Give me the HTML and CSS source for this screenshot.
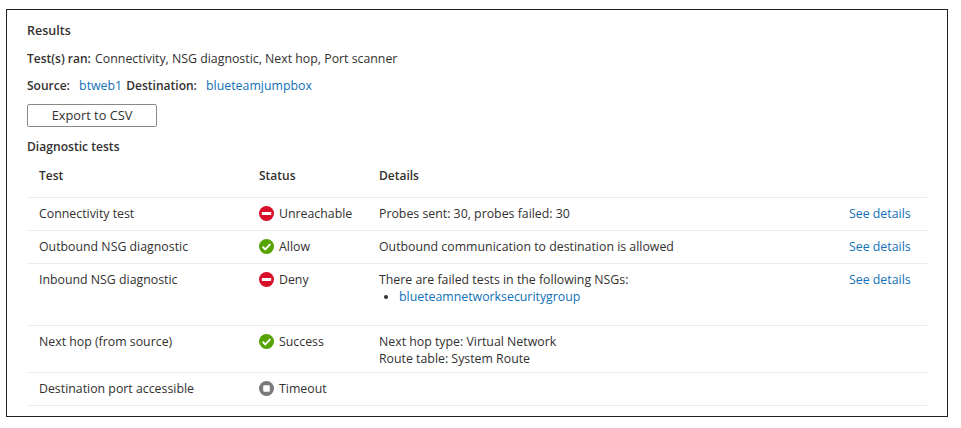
FILE: index.html

```html
<!DOCTYPE html>
<html lang="en">
<head>
  <meta charset="UTF-8">
  <meta name="viewport" content="width=device-width, initial-scale=1.0">
  <title>Results</title>
  <link rel="stylesheet" href="styles.css">
</head>
<body>
  <div class="frame">
    <h2 class="title">Results</h2>
    <p class="meta"><b>Test(s) ran:</b> <span class="ran">Connectivity, NSG diagnostic, Next hop, Port scanner</span></p>
    <p class="meta"><b>Source:</b> <a href="#" class="value">btweb1</a> <b class="dest">Destination:</b> <a href="#" class="value">blueteamjumpbox</a></p>
    <button class="button" type="button">Export to CSV</button>
    <h3 class="subtitle">Diagnostic tests</h3>

    <table class="tests">
      <thead>
        <tr>
          <th class="col-test">Test</th>
          <th class="col-status">Status</th>
          <th class="col-details">Details</th>
          <th class="col-link"></th>
        </tr>
      </thead>
      <tbody>
        <tr>
          <td>Connectivity test</td>
          <td>
            <div class="status">
              <svg class="icon" viewBox="0 0 16 16"><circle cx="8" cy="8" r="8" fill="#d90f2a"/><rect x="3" y="6.4" width="10" height="3.2" rx=".6" fill="#fff"/></svg>
              Unreachable
            </div>
          </td>
          <td>Probes sent: 30, probes failed: 30</td>
          <td><a href="#">See details</a></td>
        </tr>
        <tr>
          <td>Outbound NSG diagnostic</td>
          <td>
            <div class="status">
              <svg class="icon" viewBox="0 0 16 16"><circle cx="8" cy="8" r="8" fill="#57a300"/><path d="M3.9 8.3l2.8 2.8 5.4-5.6" fill="none" stroke="#fff" stroke-width="2"/></svg>
              Allow
            </div>
          </td>
          <td>Outbound communication to destination is allowed</td>
          <td><a href="#">See details</a></td>
        </tr>
        <tr class="tall">
          <td>Inbound NSG diagnostic</td>
          <td>
            <div class="status">
              <svg class="icon" viewBox="0 0 16 16"><circle cx="8" cy="8" r="8" fill="#d90f2a"/><rect x="3" y="6.4" width="10" height="3.2" rx=".6" fill="#fff"/></svg>
              Deny
            </div>
          </td>
          <td>
            There are failed tests in the following NSGs:
            <ul class="nsgs">
              <li><a href="#">blueteamnetworksecuritygroup</a></li>
            </ul>
          </td>
          <td><a href="#">See details</a></td>
        </tr>
        <tr class="two-line">
          <td>Next hop (from source)</td>
          <td>
            <div class="status">
              <svg class="icon" viewBox="0 0 16 16"><circle cx="8" cy="8" r="8" fill="#57a300"/><path d="M3.9 8.3l2.8 2.8 5.4-5.6" fill="none" stroke="#fff" stroke-width="2"/></svg>
              Success
            </div>
          </td>
          <td>Next hop type: Virtual Network<br>Route table: System Route</td>
          <td></td>
        </tr>
        <tr>
          <td>Destination port accessible</td>
          <td>
            <div class="status">
              <svg class="icon" viewBox="0 0 16 16"><circle cx="8" cy="8" r="8" fill="#7a7a7a"/><rect x="4.5" y="4.5" width="7" height="7" rx="1.2" fill="#fff"/></svg>
              Timeout
            </div>
          </td>
          <td></td>
          <td></td>
        </tr>
      </tbody>
    </table>
  </div>
</body>
</html>
```

FILE: styles.css

```css
body {
  font-family: "Open Sans", "Noto Sans", sans-serif;
  font-size: 12.33px;
  line-height: 17px;
  color: #323130;
  margin: 0;
  padding: 9px 13px 0 6px;
  background: #fff;
}
a {
  color: #1270b8;
  text-decoration: none;
}
.frame {
  border: 1px solid #222;
  height: 408px;
  padding: 12px 19px 0 20px;
  box-sizing: border-box;
}
.title {
  font-size: 12.5px;
  font-weight: 600;
  margin: 0 0 11px;
}
.meta {
  margin: 0 0 10px;
}
.meta b {
  font-size: 12px;
  font-weight: 600;
}
.meta .ran {
  margin-left: 1px;
}
.meta .value {
  margin-left: 6px;
}
.meta .dest {
  margin-left: 1px;
}
.button {
  display: block;
  width: 130px;
  height: 23px;
  padding: 0;
  border: 1px solid #8a8886;
  border-radius: 2px;
  background: #fff;
  color: #323130;
  font: inherit;
  font-size: 12.8px;
  font-weight: 500;
}
.subtitle {
  font-size: 12.1px;
  font-weight: 600;
  margin: 11px 0 0;
}
.tests {
  width: 900px;
  table-layout: fixed;
  border-collapse: collapse;
}
.tests th {
  font-size: 12px;
  font-weight: 600;
  text-align: left;
  height: 42px;
  padding: 0 0 0 12px;
  box-sizing: border-box;
  border-bottom: 1px solid #edebe9;
}
.tests td {
  vertical-align: top;
  padding: 7px 0 8px 12px;
  border-bottom: 1px solid #edebe9;
}
.col-test { width: 220px; }
.col-status { width: 120px; }
.col-details { width: 470px; }
.status {
  display: flex;
  align-items: center;
  gap: 5px;
}
.icon {
  width: 15px;
  height: 15px;
  flex: none;
}
.nsgs {
  margin: 0;
  padding: 0 0 0 20px;
}
.tests .tall td {
  padding-bottom: 20px;
}
.tests .two-line td {
  padding-bottom: 5px;
}
```
